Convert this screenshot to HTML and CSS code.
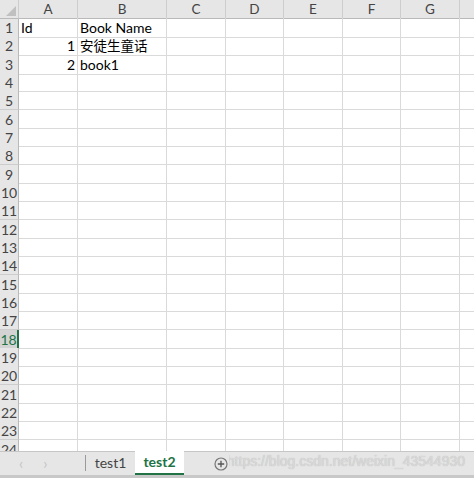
FILE: index.html
```html
<!DOCTYPE html>
<html lang="en">

<head>
    <meta charset="UTF-8">
    <title>Book</title>
    <link rel="stylesheet" href="styles.css">
</head>

<body>
    <div class="sheet">
        <div class="row head">
            <span class="corner"></span><span>A</span><span>B</span><span>C</span><span>D</span><span>E</span><span>F</span><span>G</span><span></span>
        </div>
        <div class="row"><span class="rh">1</span><span>Id</span><span>Book Name</span><span></span><span></span><span></span><span></span><span></span><span></span></div>
        <div class="row"><span class="rh">2</span><span class="num">1</span><span class="cjk">安徒生童话</span><span></span><span></span><span></span><span></span><span></span><span></span></div>
        <div class="row"><span class="rh">3</span><span class="num">2</span><span>book1</span><span></span><span></span><span></span><span></span><span></span><span></span></div>
        <div class="row"><span class="rh">4</span><span></span><span></span><span></span><span></span><span></span><span></span><span></span><span></span></div>
        <div class="row"><span class="rh">5</span><span></span><span></span><span></span><span></span><span></span><span></span><span></span><span></span></div>
        <div class="row"><span class="rh">6</span><span></span><span></span><span></span><span></span><span></span><span></span><span></span><span></span></div>
        <div class="row"><span class="rh">7</span><span></span><span></span><span></span><span></span><span></span><span></span><span></span><span></span></div>
        <div class="row"><span class="rh">8</span><span></span><span></span><span></span><span></span><span></span><span></span><span></span><span></span></div>
        <div class="row"><span class="rh">9</span><span></span><span></span><span></span><span></span><span></span><span></span><span></span><span></span></div>
        <div class="row"><span class="rh">10</span><span></span><span></span><span></span><span></span><span></span><span></span><span></span><span></span></div>
        <div class="row"><span class="rh">11</span><span></span><span></span><span></span><span></span><span></span><span></span><span></span><span></span></div>
        <div class="row"><span class="rh">12</span><span></span><span></span><span></span><span></span><span></span><span></span><span></span><span></span></div>
        <div class="row"><span class="rh">13</span><span></span><span></span><span></span><span></span><span></span><span></span><span></span><span></span></div>
        <div class="row"><span class="rh">14</span><span></span><span></span><span></span><span></span><span></span><span></span><span></span><span></span></div>
        <div class="row"><span class="rh">15</span><span></span><span></span><span></span><span></span><span></span><span></span><span></span><span></span></div>
        <div class="row"><span class="rh">16</span><span></span><span></span><span></span><span></span><span></span><span></span><span></span><span></span></div>
        <div class="row"><span class="rh">17</span><span></span><span></span><span></span><span></span><span></span><span></span><span></span><span></span></div>
        <div class="row"><span class="rh selected">18</span><span></span><span></span><span></span><span></span><span></span><span></span><span></span><span></span></div>
        <div class="row"><span class="rh">19</span><span></span><span></span><span></span><span></span><span></span><span></span><span></span><span></span></div>
        <div class="row"><span class="rh">20</span><span></span><span></span><span></span><span></span><span></span><span></span><span></span><span></span></div>
        <div class="row"><span class="rh">21</span><span></span><span></span><span></span><span></span><span></span><span></span><span></span><span></span></div>
        <div class="row"><span class="rh">22</span><span></span><span></span><span></span><span></span><span></span><span></span><span></span><span></span></div>
        <div class="row"><span class="rh">23</span><span></span><span></span><span></span><span></span><span></span><span></span><span></span><span></span></div>
        <div class="row"><span class="rh">24</span><span></span><span></span><span></span><span></span><span></span><span></span><span></span><span></span></div>
    </div>

    <div class="tabs">
        <div class="nav"><span>&#8249;</span><span>&#8250;</span></div>
        <div class="tab">test1</div>
        <div class="tab active">test2</div>
        <div class="add">
            <svg width="14" height="14" viewBox="0 0 14 14">
                <circle cx="7" cy="7" r="6" fill="none" stroke="#777" stroke-width="1.2" />
                <path d="M7 3.8v6.4M3.8 7h6.4" stroke="#555" stroke-width="1.3" />
            </svg>
        </div>
        <div class="mark">https://blog.csdn.net/weixin_43544930</div>
    </div>
    <div class="bottom"></div>
</body>

</html>
```

FILE: styles.css
```css
body {
    margin: 0;
    width: 474px;
    height: 478px;
    overflow: hidden;
    display: flex;
    flex-direction: column;
    font-family: Lato, "Liberation Sans", sans-serif;
    background: #fff;
}

.sheet {
    height: 451px;
    overflow: hidden;
}

.row {
    display: grid;
    grid-template-columns: 19px 59px 89px 59px 58px 59px 58px 59px 60px;
    height: 18.33px;
    font-size: 14px;
    color: #000;
}

.row span {
    box-sizing: border-box;
    border-right: 1px solid #dadada;
    border-bottom: 1px solid #dadada;
    padding: 1px 2px 0;
    line-height: 18px;
    white-space: nowrap;
}

.row .num {
    text-align: right;
}

.row .cjk {
    font-family: "Noto Sans CJK SC", sans-serif;
    font-size: 13.5px;
    line-height: 17px;
}

.head {
    height: 18px;
    background: #e6e6e6;
    color: #444;
    font-size: 13.5px;
}

.head span {
    text-align: center;
    border-right: 1px solid #cdcdcd;
    border-bottom: 1px solid #b9b9b9;
    line-height: 17px;
}

.head .corner {
    position: relative;
}

.head .corner::after {
    content: "";
    position: absolute;
    right: 2px;
    bottom: 2px;
    border-left: 10px solid transparent;
    border-bottom: 10px solid #c0c0c0;
}

.row .rh {
    background: #e6e6e6;
    color: #444;
    text-align: center;
    padding: 1px 0 0;
    font-size: 14px;
    border-right: 1px solid #b9b9b9;
    border-bottom: 1px solid #cdcdcd;
    line-height: 17px;
}

.row .rh.selected {
    background: #d3d3d3;
    color: #217346;
    border-right: 2px solid #217346;
}

.tabs {
    position: relative;
    height: 24px;
    background: #e6e6e6;
    border-top: 1px solid #c6c6c6;
    box-sizing: border-box;
    display: flex;
    align-items: stretch;
    font-size: 14px;
    color: #444;
}

.nav {
    width: 86px;
    display: flex;
    padding-left: 19px;
    gap: 20px;
    align-items: center;
    color: #c4c4c4;
    font-size: 15px;
    border-right: 1px solid #9a9a9a;
    margin: 3px 0 4px;
    box-sizing: border-box;
}

.tab {
    width: 49px;
    text-align: center;
    line-height: 22px;
}

.tab.active {
    background: #fff;
    color: #217346;
    font-weight: bold;
    border-bottom: 2px solid #217346;
    margin-top: -1px;
    line-height: 21px;
}

.add {
    margin-left: 30px;
    display: flex;
    align-items: center;
    position: relative;
    z-index: 1;
    background: #e6e6e6;
    padding-right: 1px;
}

.mark {
    position: absolute;
    right: 9px;
    top: 1px;
    color: #d9d9d9;
    font-family: "Liberation Sans", sans-serif;
    font-size: 14px;
    text-shadow: 0 0 1px #b5b5b5;
}

.bottom {
    height: 3px;
    background: #c8c8c8;
}
```
